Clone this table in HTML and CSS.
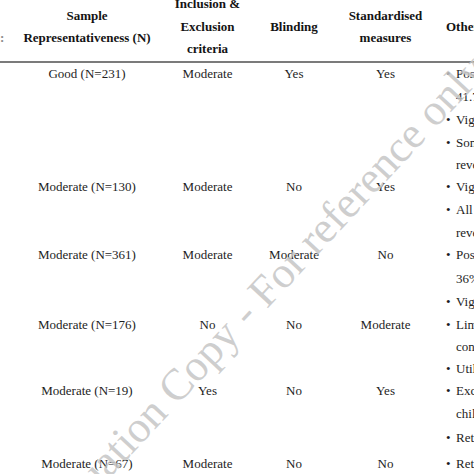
FILE: index.html
```html
<!DOCTYPE html>
<html lang="en">
<head>
<meta charset="utf-8">
<title>Quality assessment table</title>
<link rel="stylesheet" href="styles.css">
</head>
<body>
<div class="page">
  <div class="table">
    <div class="head">
      <div class="h0">&nbsp;<br>:</div>
      <div>Sample<br>Representativeness (N)</div>
      <div>Inclusion &amp;<br>Exclusion<br>criteria</div>
      <div>Blinding</div>
      <div>Standardised<br>measures</div>
      <div class="hother">Other comments</div>
    </div>
    <div class="body">
      <div class="c1 r1">Good (N=231)</div>
      <div class="c2 r1">Moderate</div>
      <div class="c3 r1">Yes</div>
      <div class="c4 r1">Yes</div>

      <div class="c1 r6">Moderate (N=130)</div>
      <div class="c2 r6">Moderate</div>
      <div class="c3 r6">No</div>
      <div class="c4 r6">Yes</div>

      <div class="c1 r9">Moderate (N=361)</div>
      <div class="c2 r9">Moderate</div>
      <div class="c3 r9">Moderate</div>
      <div class="c4 r9">No</div>

      <div class="c1 r12">Moderate (N=176)</div>
      <div class="c2 r12">No</div>
      <div class="c3 r12">No</div>
      <div class="c4 r12">Moderate</div>

      <div class="c1 r15">Moderate (N=19)</div>
      <div class="c2 r15">Yes</div>
      <div class="c3 r15">No</div>
      <div class="c4 r15">Yes</div>

      <div class="c1 r18">Moderate (N=67)</div>
      <div class="c2 r18">Moderate</div>
      <div class="c3 r18">No</div>
      <div class="c4 r18">No</div>

      <div class="o b">Possible selection bias, as</div>
      <div class="o">41.7% of eligible families declined</div>
      <div class="o b">Vigorous activity not measured</div>
      <div class="o b">Some evidence of</div>
      <div class="o">reverse causality</div>
      <div class="o b">Vigorous activity not measured</div>
      <div class="o b">All measures self-reported;</div>
      <div class="o">reverse causality possible</div>
      <div class="o b">Possible attrition bias, as</div>
      <div class="o">36% lost to follow-up</div>
      <div class="o b">Vigorous activity not measured</div>
      <div class="o b">Limited adjustment for</div>
      <div class="o">confounders</div>
      <div class="o b">Utilised parent report only</div>
      <div class="o b">Excluded overweight</div>
      <div class="o">children</div>
      <div class="o b">Retrospective recall</div>
      <div class="o b">Retrospective design</div>
    </div>
  </div>
  <div class="wm">Evaluation Copy - For reference only</div>
</div>
</body>
</html>
```

FILE: styles.css
```css
html, body {
  margin: 0;
  padding: 0;
  background: #ffffff;
}
html {
  overflow: hidden;
}
.page {
  position: relative;
  width: 474px;
  height: 474px;
  overflow: hidden;
  font-family: "Liberation Serif", "Times New Roman", serif;
  font-size: 13px;
  color: #1d1d1d;
  --cols: 8px 158px 83px 90px 93px 320px;
}
.table {
  margin-top: -7px;
  width: 752px;
}
.head {
  display: grid;
  grid-template-columns: var(--cols);
  height: 68px;
  align-items: center;
  border-bottom: 2px solid #7b7b7b;
  font-weight: bold;
  line-height: 22.5px;
  text-align: center;
  color: #141414;
}
.head .h0 {
  text-align: left;
  color: #8a8a8a;
}
.head .hother {
  text-align: left;
  padding-left: 14px;
  white-space: nowrap;
}
.body {
  display: grid;
  grid-template-columns: var(--cols);
  grid-template-rows: 21px 24px 23px 23px 21px 22px 24px 22px 23px 24px 23px 22px 22px 22px 23px 23px 25px 27px;
  align-items: center;
  line-height: 15px;
  text-align: center;
  white-space: nowrap;
}
.c1 { grid-column: 2; }
.c2 { grid-column: 3; }
.c3 { grid-column: 4; }
.c4 { grid-column: 5; }
.r1 { grid-row: 1; }
.r6 { grid-row: 6; }
.r9 { grid-row: 9; }
.r12 { grid-row: 12; }
.r15 { grid-row: 15; }
.r18 { grid-row: 18; }
.o {
  grid-column: 6;
  text-align: left;
  padding-left: 24px;
}
.o.b {
  padding-left: 14px;
  display: flex;
}
.o.b::before {
  content: "\2022";
  width: 10px;
  flex: none;
}
.wm {
  position: absolute;
  left: 13px;
  top: 529px;
  font-family: "Liberation Serif", "Times New Roman", serif;
  font-size: 44px;
  line-height: 1;
  white-space: nowrap;
  color: rgba(198, 198, 198, 0.85);
  transform-origin: 0 0;
  transform: rotate(-47deg);
  pointer-events: none;
}
```
